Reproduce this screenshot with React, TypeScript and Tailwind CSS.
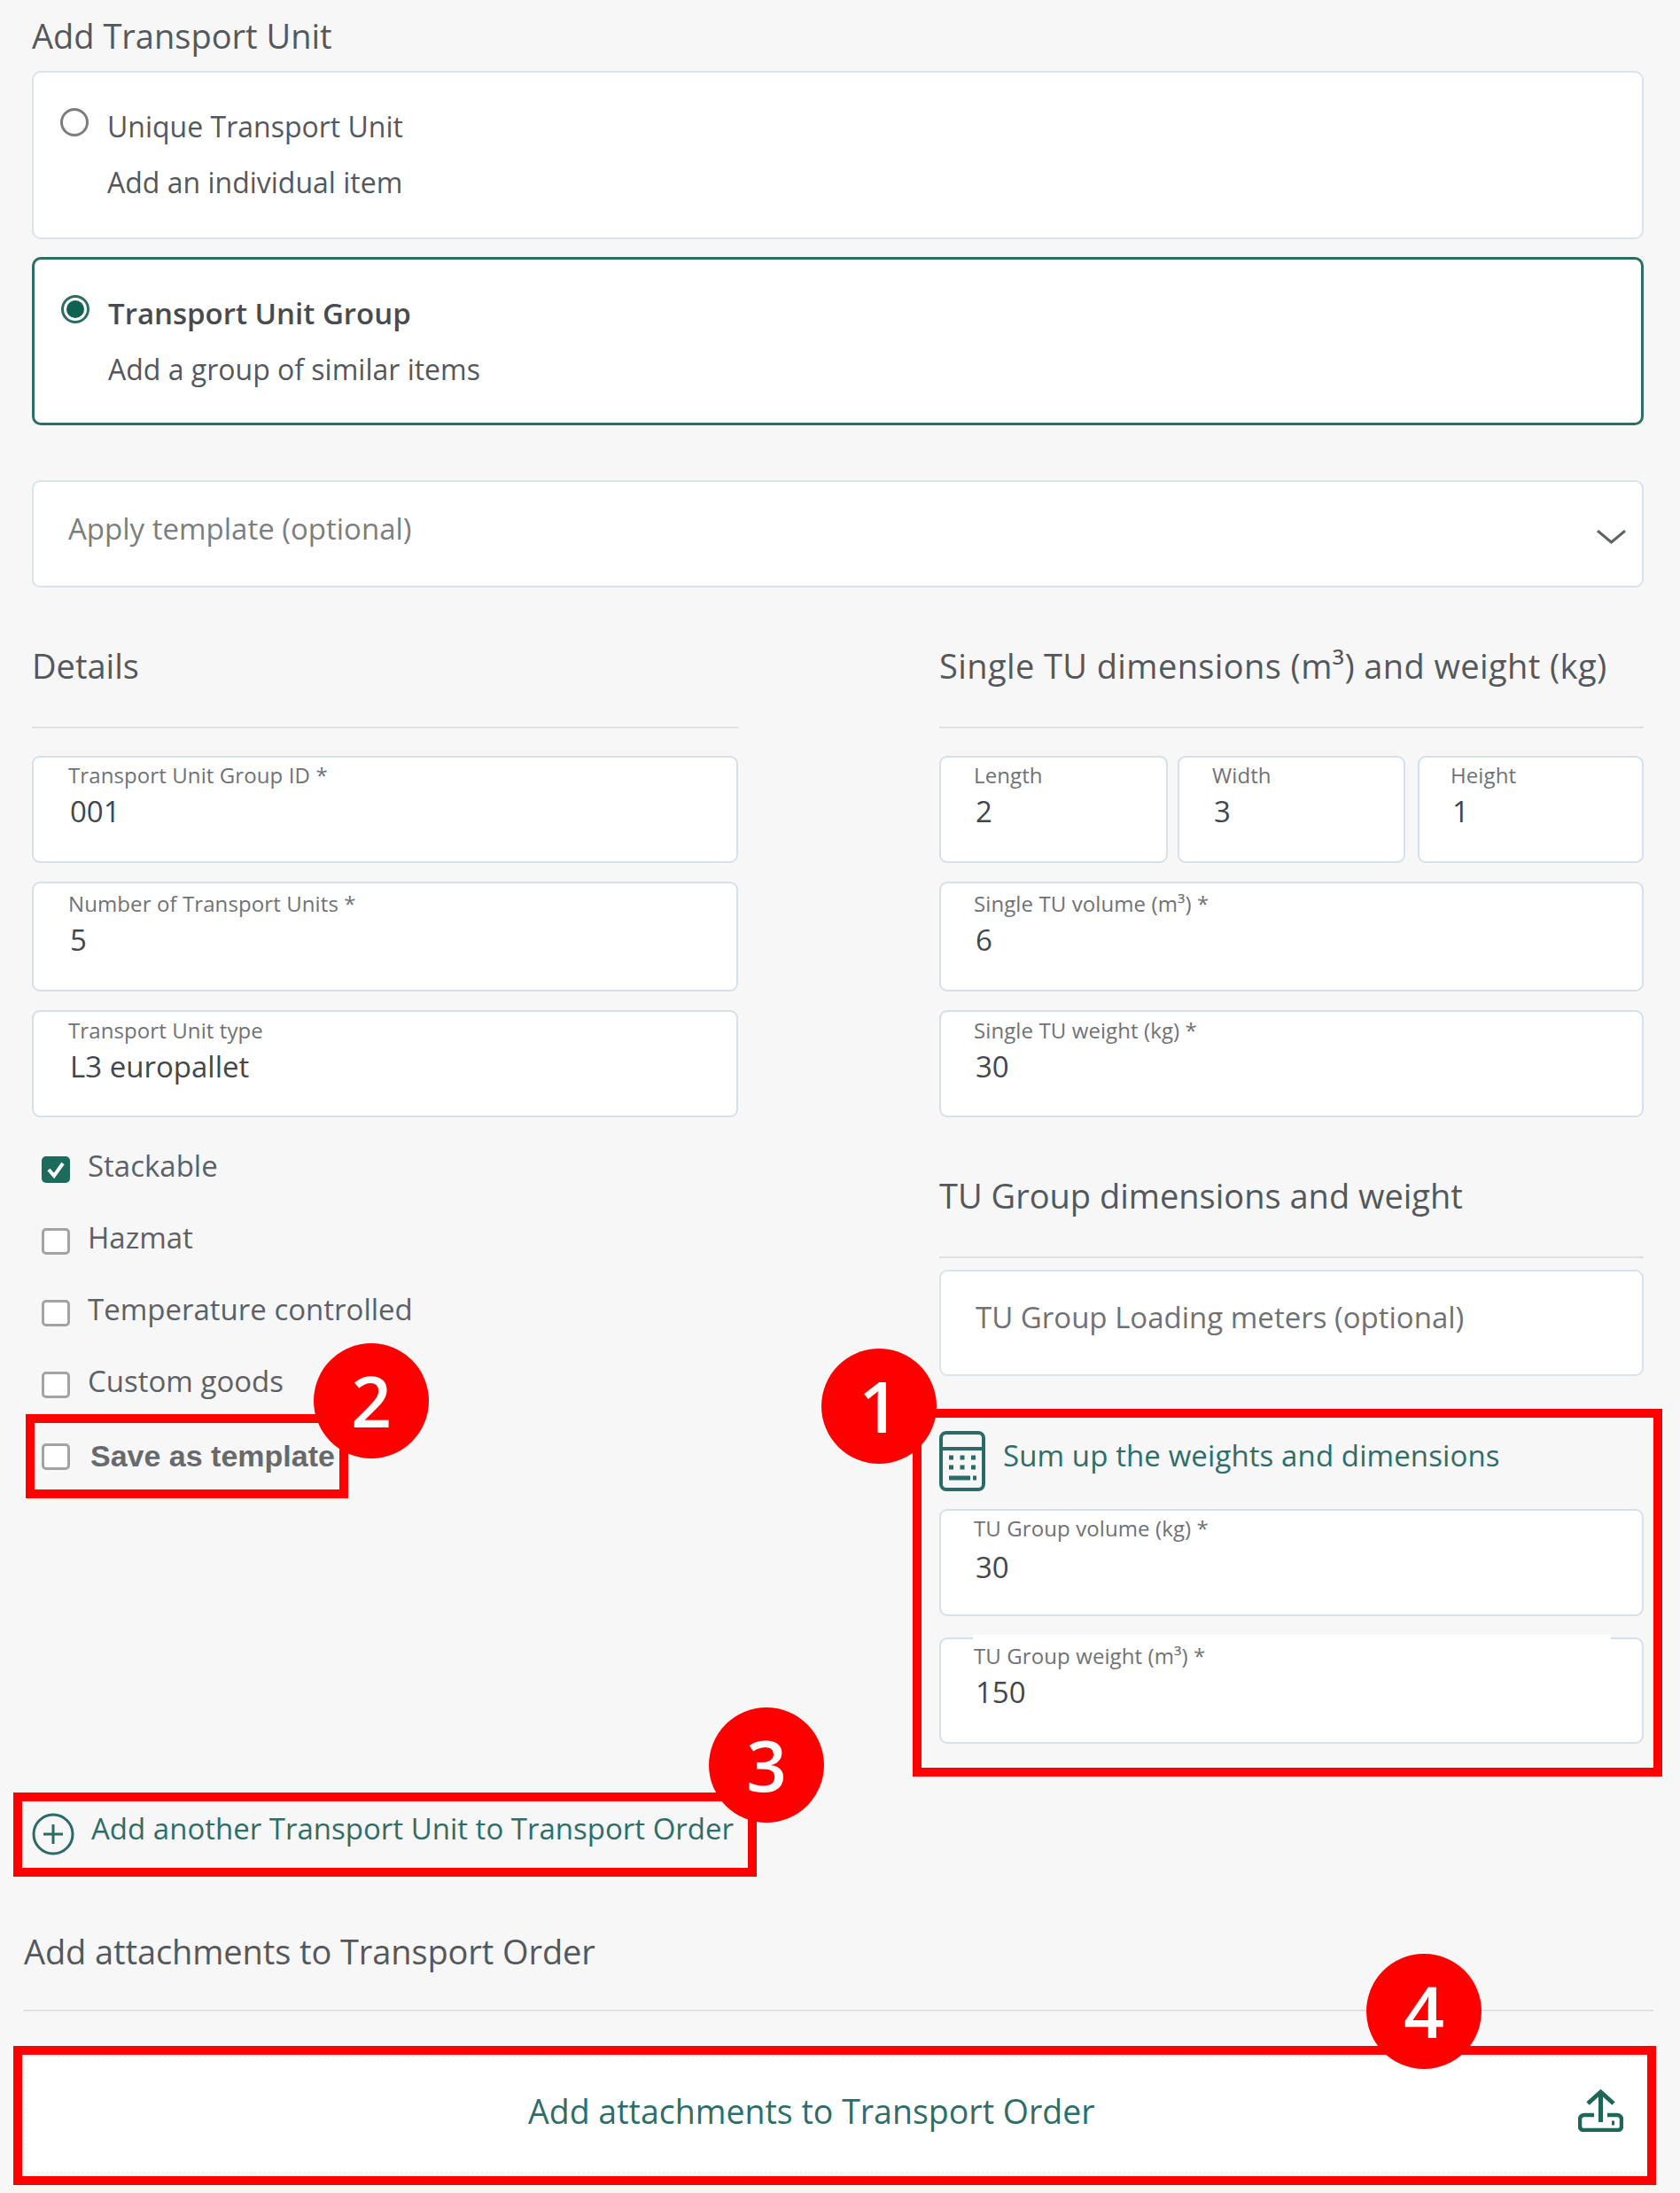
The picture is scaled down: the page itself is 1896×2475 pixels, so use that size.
function Field({ label, value, className = "", top = "pt-[5px]", gap = "mt-[6px]", pad = "pl-[39px]" }: { label: string; value: string; className?: string; top?: string; gap?: string; pad?: string }) {
  return (
    <div className={`rounded-[9px] border-2 border-[#d6e0e8] bg-white ${top} ${pad} ${className}`}>
      <p className="text-[24px] leading-[30px] tracking-[0.1px] text-[#6f7275]">{label}</p>
      <p className={`ml-[2px] text-[33px] leading-[40px] text-[#43474b] ${gap}`}>{value}</p>
    </div>
  );
}

function SectionTitle({ children, className = "" }: { children: React.ReactNode; className?: string }) {
  return (
    <h2 className={`flex items-center border-b-2 border-[#dfe0e0] text-[38px] text-[#54585c] ${className}`}>
      {children}
    </h2>
  );
}

function CheckRow({ label, checked = false }: { label: string; checked?: boolean }) {
  return (
    <div className="flex h-[81px] items-center pl-[11px]">
      {checked ? (
        <span className="flex h-[30px] w-[32px] items-center justify-center rounded-[5px] bg-[#1c6b5b]">
          <svg viewBox="0 0 32 30" className="h-[30px] w-[32px]" fill="none" stroke="#fff" strokeWidth="4">
            <path d="M8 15l6 7 10-14" />
          </svg>
        </span>
      ) : (
        <span className="h-[30px] w-[32px] rounded-[5px] border-[3px] border-[#a3a3a3] bg-white" />
      )}
      <span className="mb-[8px] ml-[20px] text-[33px] text-[#5d6165]">{label}</span>
    </div>
  );
}

function RadioCard({ title, sub, selected = false }: { title: string; sub: string; selected?: boolean }) {
  return (
    <div className={`flex h-[190px] rounded-[10px] bg-white pt-[40px] pl-[30px] ${selected ? "border-[3px] border-[#2c6e63]" : "border-2 border-[#d9e3ea]"}`}>
      {selected ? (
        <span className="flex h-[32px] w-[32px] items-center justify-center rounded-full border-[3px] border-[#2c6e63]">
          <span className="h-[20px] w-[20px] rounded-full bg-[#0f6152]" />
        </span>
      ) : (
        <span className="h-[32px] w-[32px] rounded-full border-[3px] border-[#7d7d7d] bg-white" />
      )}
      <div className="-mt-[1px] ml-[21px]">
        <p className={`leading-[44px] ${selected ? "text-[33px] font-semibold text-[#474b4f]" : "text-[32px] text-[#54585c]"}`}>{title}</p>
        <p className="mt-[19px] text-[32px] leading-[44px] text-[#54585c]">{sub}</p>
      </div>
    </div>
  );
}

function Badge({ n, className }: { n: string; className: string }) {
  return (
    <div className={`absolute flex h-[130px] w-[130px] items-center justify-center rounded-full bg-[#ff0000] pb-[3px] text-[80px] font-semibold text-white ${className}`}>
      {n}
    </div>
  );
}

export default function App() {
  return (
    <div className="relative h-[2475px] w-full overflow-hidden bg-[#f7f7f7] pr-[41px] pl-[36px] font-['Open_Sans',sans-serif]">
      <h1 className="flex h-[80px] items-center text-[38px] text-[#54585c]">Add Transport Unit</h1>

      <div className="flex flex-col gap-[20px]">
        <RadioCard title="Unique Transport Unit" sub="Add an individual item" />
        <RadioCard title="Transport Unit Group" sub="Add a group of similar items" selected />
      </div>

      <div className="mt-[62px] flex h-[121px] items-center justify-between rounded-[9px] border-2 border-[#d9e3ea] bg-white pr-[18px] pb-[12px] pl-[39px]">
        <span className="text-[33px] text-[#7b7e80]">Apply template (optional)</span>
        <svg viewBox="0 0 33 16" className="mt-[18px] h-[16px] w-[33px]" fill="none" stroke="#5f6366" strokeWidth="3">
          <path d="M1 1l15.5 13L32 1" />
        </svg>
      </div>

      <div className="mt-[27px] grid grid-cols-[797px_795px] gap-x-[227px]">
        <div>
          <SectionTitle className="h-[132px] pb-[8px]">Details</SectionTitle>
          <div className="mt-[31px] flex flex-col gap-[21px]">
            <Field className="h-[121px]" label="Transport Unit Group ID *" value="001" />
            <Field className="h-[124px]" top="pt-[8px]" label="Number of Transport Units *" value="5" />
            <Field className="h-[121px]" top="pt-[6px]" label="Transport Unit type" value="L3 europallet" />
          </div>
          <div className="mt-[18px]">
            <CheckRow label="Stackable" checked />
            <CheckRow label="Hazmat" />
            <CheckRow label="Temperature controlled" />
            <CheckRow label="Custom goods" />
            <div className="flex h-[81px] items-center pl-[11px]">
              <span className="h-[30px] w-[32px] rounded-[5px] border-[3px] border-[#a3a3a3] bg-white" />
              <span className="ml-[23px] font-['Liberation_Sans',sans-serif] text-[34px] font-bold text-[#666a6d]">Save as template</span>
            </div>
          </div>
        </div>

        <div>
          <SectionTitle className="h-[132px] pb-[8px] tracking-[0.4px]">Single TU dimensions (m³) and weight (kg)</SectionTitle>
          <div className="mt-[31px] flex flex-col gap-[21px]">
            <div className="flex">
              <Field className="h-[121px] w-[258px]" pad="pl-[37px]" label="Length" value="2" />
              <Field className="ml-[11px] h-[121px] w-[257px]" pad="pl-[37px]" label="Width" value="3" />
              <Field className="ml-[14px] h-[121px] w-[255px]" pad="pl-[35px]" label="Height" value="1" />
            </div>
            <Field className="h-[124px]" pad="pl-[37px]" top="pt-[8px]" label="Single TU volume (m³) *" value="6" />
            <Field className="h-[121px]" pad="pl-[37px]" top="pt-[6px]" label="Single TU weight (kg) *" value="30" />
          </div>

          <SectionTitle className="mt-[30px] h-[129px] pb-[10px]">TU Group dimensions and weight</SectionTitle>
          <div className="mt-[13px] flex h-[120px] items-center rounded-[9px] border-2 border-[#d9e3ea] bg-white pb-[13px] pl-[39px]">
            <span className="text-[33px] text-[#6f7275]">TU Group Loading meters (optional)</span>
          </div>

          <div className="mt-[62px] flex h-[68px] items-center">
            <svg viewBox="0 0 52 68" className="h-[68px] w-[52px]" fill="none" stroke="#2b6b67" strokeWidth="4">
              <rect x="2" y="2" width="48" height="64" rx="6" />
              <path d="M2 20h48" />
              <path d="M11 30h5M23.5 30h5M36 30h5M11 41h5M23.5 41h5M36 41h5M11 53h24M38 53h4" strokeWidth="5" />
            </svg>
            <span className="mb-[12px] ml-[20px] text-[33px] tracking-[0.1px] text-[#2f6d69]">Sum up the weights and dimensions</span>
          </div>
          <Field className="mt-[20px] h-[121px]" pad="pl-[37px]" gap="mt-[9px]" label="TU Group volume (kg) *" value="30" />
          <div className="relative mt-[24px]">
            <Field className="h-[120px]" pad="pl-[37px]" top="pt-[4px]" label="TU Group weight (m³) *" value="150" />
            <div className="absolute -top-[3px] right-[37px] left-[38px] h-[5px] bg-white" />
          </div>
        </div>
      </div>

      <div className="mt-[72px] flex h-[54px] items-center text-[#2f6d69]">
        <svg viewBox="0 0 48 48" className="mt-[6px] h-[48px] w-[48px]" fill="none" stroke="#2b6b67" strokeWidth="3">
          <circle cx="24" cy="24" r="22" />
          <path d="M24 13v22M13 24h22" />
        </svg>
        <span className="mb-[6px] ml-[19px] text-[33px]">Add another Transport Unit to Transport Order</span>
      </div>

      <div className="-mr-[11px] -ml-[9px]">
        <SectionTitle className="h-[176px] pt-[42px] tracking-[-0.1px]">Add attachments to Transport Order</SectionTitle>
        <div className="mt-[50px] flex h-[132px] items-center justify-between rounded-[8px] border border-dashed border-[#e6edf0] bg-white pr-[33px] pb-[6px] pl-[568px]">
          <span className="text-[37.5px] text-[#2f6d69]">Add attachments to Transport Order</span>
          <svg viewBox="0 0 51 49" className="-mt-[4px] h-[49px] w-[51px]" fill="none" stroke="#1f6658" strokeWidth="5">
            <path d="M25.5 38V4M11 17L25.5 4 40 17" />
            <path d="M18 30H7a5 5 0 0 0-5 5v8a4 4 0 0 0 4 4h39a4 4 0 0 0 4-4v-8a5 5 0 0 0-5-5H33" strokeWidth="4.5" />
            <path d="M38 39h3" />
          </svg>
        </div>
      </div>

      {/* annotation boxes and numbered badges */}
      <div className="absolute top-[1590px] left-[1030px] h-[415px] w-[846px] border-[10px] border-[#ff0000]" />
      <div className="absolute top-[1596px] left-[29px] h-[95px] w-[364px] border-[10px] border-[#ff0000]" />
      <div className="absolute top-[2023px] left-[15px] h-[95px] w-[839px] border-[10px] border-[#ff0000]" />
      <div className="absolute top-[2309px] left-[15px] h-[157px] w-[1854px] border-[10px] border-[#ff0000]" />
      <Badge n="1" className="top-[1522px] left-[927px]" />
      <Badge n="2" className="top-[1516px] left-[354px]" />
      <Badge n="3" className="top-[1927px] left-[800px]" />
      <Badge n="4" className="top-[2205px] left-[1542px]" />
    </div>
  );
}
